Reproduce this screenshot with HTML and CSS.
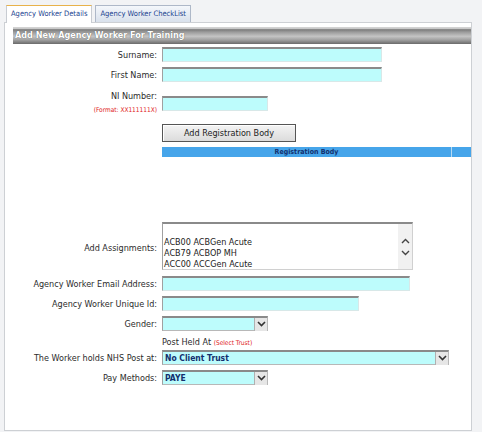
FILE: index.html
```html
<!DOCTYPE html>
<html lang="en">
  <head>
    <meta charset="UTF-8" />
    <title>Agency Worker Details</title>
    <link rel="stylesheet" href="styles.css">
  </head>
  <body>
    <div class="tabs">
      <div class="tab active">Agency Worker Details</div>
      <div class="tab">Agency Worker CheckList</div>
    </div>

    <div class="panel">
      <div class="panel-title">Add New Agency Worker For Training</div>

      <form class="worker-form">
        <div class="row">
          <label for="surname">Surname:</label>
          <input type="text" id="surname" class="field w-wide" />
        </div>

        <div class="row">
          <label for="firstname">First Name:</label>
          <input type="text" id="firstname" class="field w-wide" />
        </div>

        <div class="row row-ni">
          <div class="label-stack">
            <label for="ni">NI Number:</label>
            <span class="hint">(Format: XX111111X)</span>
          </div>
          <input type="text" id="ni" class="field w-short" />
        </div>

        <div class="row row-button">
          <span></span>
          <button type="button" class="btn">Add Registration Body</button>
        </div>

        <div class="row row-grid">
          <span></span>
          <div class="reg-grid">
            <div class="reg-head">Registration Body</div>
            <div class="reg-tail"></div>
          </div>
        </div>

        <div class="row row-list">
          <label>Add Assignments:</label>
          <div class="listbox">
            <div class="list-items">
              <div class="list-item">&nbsp;</div>
              <div class="list-item">ACB00 ACBGen Acute</div>
              <div class="list-item">ACB79 ACBOP MH</div>
              <div class="list-item">ACC00 ACCGen Acute</div>
            </div>
            <div class="list-scroll">
              <svg width="9" height="6" viewBox="0 0 9 6"><path d="M1 5 L4.5 1.5 L8 5" fill="none" stroke="#444" stroke-width="1.4"/></svg>
              <svg width="9" height="6" viewBox="0 0 9 6"><path d="M1 1 L4.5 4.5 L8 1" fill="none" stroke="#444" stroke-width="1.4"/></svg>
            </div>
          </div>
        </div>

        <div class="row">
          <label for="email">Agency Worker Email Address:</label>
          <input type="text" id="email" class="field w-email" />
        </div>

        <div class="row">
          <label for="uid">Agency Worker Unique Id:</label>
          <input type="text" id="uid" class="field w-uid" />
        </div>

        <div class="row">
          <label for="gender">Gender:</label>
          <div class="select w-short">
            <span class="select-value"></span>
            <span class="select-arrow">
              <svg width="9" height="6" viewBox="0 0 9 6"><path d="M1 1 L4.5 4.5 L8 1" fill="none" stroke="#333" stroke-width="1.6"/></svg>
            </span>
          </div>
        </div>

        <div class="row row-note">
          <span></span>
          <div class="note">Post Held At <span class="hint">(Select Trust)</span></div>
        </div>

        <div class="row">
          <label>The Worker holds NHS Post at:</label>
          <div class="select w-trust">
            <span class="select-value">No Client Trust</span>
            <span class="select-arrow">
              <svg width="9" height="6" viewBox="0 0 9 6"><path d="M1 1 L4.5 4.5 L8 1" fill="none" stroke="#333" stroke-width="1.6"/></svg>
            </span>
          </div>
        </div>

        <div class="row">
          <label>Pay Methods:</label>
          <div class="select w-short">
            <span class="select-value">PAYE</span>
            <span class="select-arrow">
              <svg width="9" height="6" viewBox="0 0 9 6"><path d="M1 1 L4.5 4.5 L8 1" fill="none" stroke="#333" stroke-width="1.6"/></svg>
            </span>
          </div>
        </div>
      </form>
    </div>
  </body>
</html>
```

FILE: styles.css
```css
:root {
  --label: #2b2b2b;
  --field: #bdfcfc;
  --navy: #12306e;
  --red: #e02020;
}

* {
  box-sizing: border-box;
  margin: 0;
  padding: 0;
}

body {
  background: #f2f3f5;
  font-family: "DejaVu Sans Condensed", "DejaVu Sans", Verdana, sans-serif;
  font-size: 9px;
  color: var(--label);
  padding: 5px 0 0 4px;
  width: 482px;
  height: 432px;
  overflow: hidden;
}

/* Tabs */
.tabs {
  display: flex;
  gap: 3px;
  padding-left: 2px;
  height: 17px;
}

.tab {
  height: 17px;
  padding: 0 4px;
  line-height: 16px;
  font-size: 7.5px;
  color: #1b3f8f;
  border: 1px solid #aeb8c8;
  border-bottom: none;
  background: linear-gradient(#f4f7fb, #d9e1ec);
}

.tab.active {
  background: #fff;
  border-color: #e8b24a #c8ccd2 #fff;
  position: relative;
  z-index: 1;
  height: 18px;
}

/* Panel */
.panel {
  width: 468px;
  height: 409px;
  background: #fff;
  border: 1px solid #cdd0d4;
  padding: 4px 0 0 0;
}

.panel-title {
  margin-left: 8px;
  height: 17px;
  line-height: 17px;
  padding-left: 2px;
  color: #fff;
  font-weight: bold;
  font-size: 9px;
  text-shadow: 0 0 1px #444;
  background: linear-gradient(#d2d2d2 0, #d2d2d2 8%, #7c7c7c 16%, #9c9c9c 30%, #c4c4c4 55%, #a2a2a2 75%, #6a6a6a 100%);
}

/* Form rows */
.worker-form {
  display: flex;
  flex-direction: column;
  padding-top: 3px;
}

.row {
  display: grid;
  grid-template-columns: 152px 1fr;
  column-gap: 5px;
  align-items: center;
  margin-bottom: 5px;
}

.row label {
  text-align: right;
  white-space: nowrap;
}

.field {
  height: 15px;
  background: var(--field);
  border: 1px solid #d8e8e8;
  border-top: 2px solid #8a8a8a;
  border-left: 1px solid #a0a0a0;
  outline: none;
}

.w-wide { width: 220px; }
.w-short { width: 106px; }
.w-email { width: 248px; }
.w-uid { width: 197px; }
.w-trust { width: 287px; }

.row-ni {
  align-items: start;
  margin-top: 4px;
}

.row-ni .field {
  margin-top: 5px;
}

.label-stack {
  display: flex;
  flex-direction: column;
  align-items: flex-end;
  gap: 5px;
}

.hint {
  color: var(--red);
  font-size: 6.5px;
}

.row-button {
  margin-top: 5px;
}

.btn {
  width: 134px;
  height: 18px;
  font-family: inherit;
  font-size: 9px;
  color: #222;
  background: linear-gradient(#f4f4f4, #dcdcdc);
  border: 1px solid #555;
  box-shadow: inset 1px 1px 0 #fff;
}

.reg-grid {
  display: flex;
  height: 10px;
}

.reg-head {
  width: 290px;
  background: #46a5ea;
  color: var(--navy);
  font-weight: bold;
  font-size: 7px;
  line-height: 10px;
  text-align: center;
  border-right: 1px solid #b5d9f3;
}

.reg-tail {
  flex: 1;
  background: #46a5ea;
}

/* Assignments listbox */
.row-list {
  margin-top: 60px;
  margin-bottom: 6px;
}

.row-list label {
  margin-top: 4px;
}

.listbox {
  width: 251px;
  height: 48px;
  display: flex;
  border: 1px solid #d0d0d0;
  border-top: 2px solid #8a8a8a;
  border-left: 1px solid #a0a0a0;
  background: #fff;
  overflow: hidden;
}

.list-items {
  flex: 1;
  padding: 2px 1px 0;
}

.list-item {
  height: 11px;
  line-height: 11px;
  color: #222;
}

.list-scroll {
  width: 14px;
  background: #f1f1f1;
  display: flex;
  flex-direction: column;
  align-items: center;
  justify-content: center;
  gap: 6px;
}

/* Selects */
.select {
  height: 15px;
  display: flex;
  align-items: center;
  background: var(--field);
  border: 1px solid #b8b8b8;
  border-top: 2px solid #8a8a8a;
  border-left: 1px solid #a0a0a0;
}

.select-value {
  flex: 1;
  padding-left: 2px;
  color: var(--navy);
  font-weight: bold;
  font-size: 8.5px;
  line-height: 12px;
}

.select-arrow {
  width: 13px;
  height: 13px;
  display: flex;
  align-items: center;
  justify-content: center;
  background: #e6e6e6;
  border-left: 1px solid #b0b0b0;
}

.row-note {
  margin-top: 1px;
  margin-bottom: 3px;
}

.note {
  color: var(--label);
}
```
